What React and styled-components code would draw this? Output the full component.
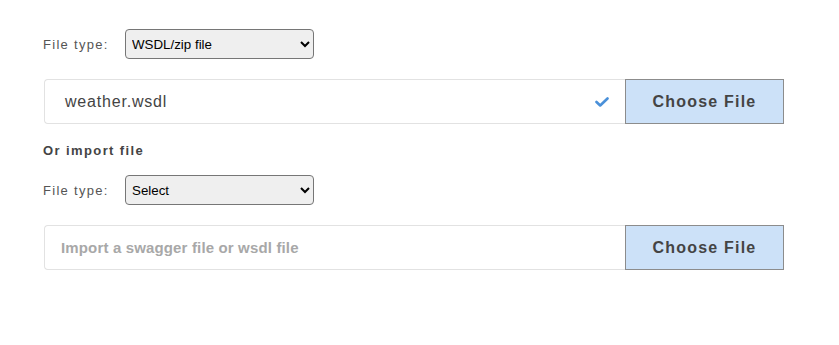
import React from 'react'
import styled, { createGlobalStyle } from 'styled-components'

const GlobalStyle = createGlobalStyle`
  html, body { margin: 0; padding: 0; background: #fff; }
  body { font-family: "Liberation Sans", Arial, sans-serif; }
`;

const Page = styled.div`
  padding: 29px 55px 40px 44px;
  display: flex; flex-direction: column;
`;

const TypeRow = styled.div`
  display: flex; align-items: center; height: 30px;
`;

const Label = styled.label`
  width: 82px; margin-left: -1px;
  font-size: 13px; letter-spacing: 1.3px; color: #555;
`;

const Select = styled.select`
  width: 189px; height: 30px; padding: 0 2px;
  font-family: "Liberation Sans", Arial, sans-serif; font-size: 13.33px; color: #000;
  background: #efefef; border: 1px solid #767676; border-radius: 4px;
`;

const FileRow = styled.div`
  display: flex; height: 45px; margin-top: 20px;
`;

const Field = styled.div`
  flex: 1; display: flex; align-items: center; justify-content: space-between;
  padding: 0 17px 0 20px; margin-right: -1px;
  border: 1px solid #e2e2e2; border-right: none; border-radius: 4px 0 0 4px;
  font-size: ${p => (p.placeholder ? '15px' : '16px')};
  font-weight: ${p => (p.placeholder ? 700 : 400)};
  letter-spacing: ${p => (p.placeholder ? '0.15px' : '0.8px')};
  color: ${p => (p.placeholder ? '#a8a8a8' : '#444')};
  padding-left: ${p => (p.placeholder ? '16px' : '20px')};
`;

const Check = styled.svg`
  width: 14px; height: 10px; margin-top: 1px;
`;

const ChooseButton = styled.button`
  width: 159px; height: 45px;
  background: #cce1f8; border: 1px solid #8c8c8c;
  font-family: "Liberation Sans", Arial, sans-serif;
  font-size: 16px; font-weight: 700; letter-spacing: 1.2px; color: #444;
`;

const Heading = styled.div`
  margin-top: 19px; margin-left: -1px; margin-bottom: 17px;
  font-size: 13px; font-weight: 700; letter-spacing: 1.4px; color: #444;
`;

function FilePicker({ value, placeholder }) {
  return (
    <FileRow>
      <Field placeholder={!value ? 1 : 0}>
        <span>{value || placeholder}</span>
        {value && (
          <Check viewBox="0 0 14 10">
            <path d="M1.5 5 L5.2 8.5 L12.5 1.5" fill="none" stroke="#4a90d9" strokeWidth="2.6" strokeLinecap="round" strokeLinejoin="round" />
          </Check>
        )}
      </Field>
      <ChooseButton>Choose File</ChooseButton>
    </FileRow>
  );
}

export default function App() {
  return (
    <Page>
      <GlobalStyle />
      <TypeRow>
        <Label>File type:</Label>
        <Select defaultValue="wsdl">
          <option value="select">Select</option>
          <option value="wsdl">WSDL/zip file</option>
          <option value="swagger">Swagger file</option>
        </Select>
      </TypeRow>
      <FilePicker value="weather.wsdl" />
      <Heading>Or import file</Heading>
      <TypeRow>
        <Label>File type:</Label>
        <Select defaultValue="select">
          <option value="select">Select</option>
          <option value="wsdl">WSDL/zip file</option>
          <option value="swagger">Swagger file</option>
        </Select>
      </TypeRow>
      <FilePicker placeholder="Import a swagger file or wsdl file" />
    </Page>
  );
}
